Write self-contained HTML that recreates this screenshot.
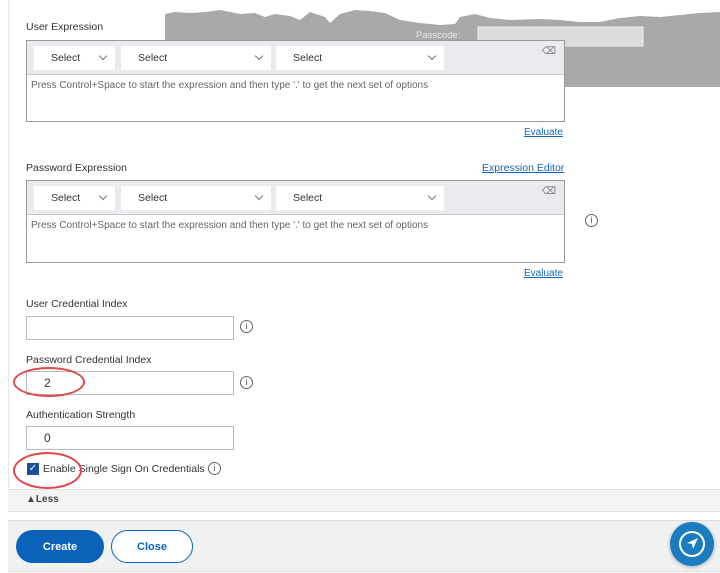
<!DOCTYPE html>
<html><head><style>
body{margin:0;width:720px;height:573px;background:#fff;font-family:"Liberation Sans",sans-serif;position:relative;overflow:hidden;font-size:11px;color:#333}
.a{position:absolute}
.lbl{position:absolute;left:26px;font-size:10.5px;color:#333}
.box{position:absolute;left:26px;width:537px;border:1px solid #9a9a9a;background:#fff}
.tb{height:33px;background:#e9ebee;border-bottom:1px solid #c8c8c8;position:relative}
.sel{position:absolute;top:5px;height:24px;background:#fff;font-size:10.5px;line-height:24px;box-sizing:border-box;padding-left:17px}
.sel:after{content:"";position:absolute;right:9px;top:7px;width:5px;height:5px;border-right:1px solid #777;border-bottom:1px solid #777;transform:rotate(45deg)}
.ph{font-size:10px;color:#666;padding:5px 4px}
.ev{position:absolute;font-size:10px;color:#1565b5;text-decoration:underline}
.inp{position:absolute;left:26px;width:208px;height:24px;border:1px solid #bbb;background:#fff;box-sizing:border-box;font-size:12px;line-height:22px;padding-left:17px}
.info{position:absolute;width:11px;height:11px;border:1px solid #666;border-radius:50%;font-size:9px;line-height:11px;text-align:center;color:#555}
</style></head><body>
<div class="a" style="left:8px;top:0;width:1px;height:490px;background:#e6e6e6"></div>
<svg class="a" style="left:0;top:0" width="720" height="90"><path d="M165 14 L175 12 L190 13 L205 12 L220 10 L240 14 L255 13 L265 17 L275 14 L290 16 L300 20 L310 12 L325 17 L330 23 L340 14 L355 10 L370 11 L385 13 L400 20 L420 23 L440 25 L455 24 L460 17 L475 14 L490 18 L510 20 L540 19 L560 20 L580 22 L600 22 L620 18 L640 16 L660 17 L680 15 L700 13 L720 12 L720 87 L563 87 L563 40 L165 40 Z" fill="#a9a9a9"/><rect x="478" y="27" width="165" height="19" fill="#dcdcdc" stroke="#f0f0f0"/><text x="416" y="38" font-size="9.5" fill="#e8e8e8" font-family="Liberation Sans">Passcode:</text></svg>
<div class="lbl" style="top:21px">User Expression</div>
<div class="box" style="top:40px;height:80px"><div class="tb"><div class="sel" style="left:7px;width:81px">Select</div><div class="sel" style="left:94px;width:150px">Select</div><div class="sel" style="left:249px;width:168px">Select</div><span class="a" style="right:8px;top:5px;font-size:10px;color:#777">⌫</span></div><div class="ph">Press Control+Space to start the expression and then type '.' to get the next set of options</div></div>
<div class="ev" style="left:524px;top:127px">Evaluate</div>
<div class="lbl" style="top:162px">Password Expression</div>
<div class="ev" style="left:482px;top:162px;font-size:10.5px">Expression Editor</div>
<div class="box" style="top:180px;height:81px"><div class="tb"><div class="sel" style="left:7px;width:81px">Select</div><div class="sel" style="left:94px;width:150px">Select</div><div class="sel" style="left:249px;width:168px">Select</div><span class="a" style="right:8px;top:5px;font-size:10px;color:#777">⌫</span></div><div class="ph">Press Control+Space to start the expression and then type '.' to get the next set of options</div></div>
<div class="info" style="left:585px;top:214px">i</div>
<div class="ev" style="left:524px;top:268px">Evaluate</div>
<div class="lbl" style="top:298px">User Credential Index</div>
<div class="inp" style="top:316px"></div><div class="info" style="left:240px;top:320px">i</div>
<div class="lbl" style="top:354px">Password Credential Index</div>
<div class="inp" style="top:371px">2</div><div class="info" style="left:240px;top:376px">i</div>
<div class="a" style="left:13px;top:367px;width:68px;height:26px;border:2px solid #e0484a;border-radius:50%"></div>
<div class="lbl" style="top:409px">Authentication Strength</div>
<div class="inp" style="top:426px">0</div>
<div class="a" style="left:27px;top:463px;width:12px;height:12px;background:#1b4f9c;color:#fff;font-size:10px;line-height:12px;text-align:center">✓</div>
<div class="a" style="left:43px;top:463px;font-size:10.5px">Enable Single Sign On Credentials</div>
<div class="info" style="left:208px;top:462px">i</div>
<div class="a" style="left:13px;top:452px;width:65px;height:33px;border:2px solid #e0484a;border-radius:50%"></div>
<div class="a" style="left:8px;top:489px;width:712px;height:21px;background:#f3f5f5;border-top:1px solid #e2e2e2;border-bottom:1px solid #e2e2e2"></div>
<div class="a" style="left:26px;top:494px;font-size:10px;font-weight:bold;color:#444">▲Less</div>
<div class="a" style="left:8px;top:520px;width:712px;height:50px;background:#f0f1f1;border-top:1px solid #e0e0e0;border-bottom:1px solid #e0e0e0"></div>
<div class="a" style="left:16px;top:530px;width:88px;height:33px;border-radius:17px;background:#0a63b8;color:#fff;font-weight:bold;font-size:11px;text-align:center;line-height:34px">Create</div>
<div class="a" style="left:111px;top:530px;width:80px;height:31px;border-radius:17px;border:1px solid #0a63b8;background:#fff;color:#0a63b8;font-weight:bold;font-size:11px;text-align:center;line-height:32px">Close</div>
<div class="a" style="left:670px;top:522px;width:44px;height:44px;border-radius:50%;background:#1c7cc0;box-shadow:0 1px 4px rgba(0,0,0,.3)"><svg width="44" height="44"><circle cx="22" cy="22" r="12" fill="none" stroke="#fff" stroke-width="2"/><path d="M28 16 L17 21 L22 22 L23 27 Z" fill="#fff"/></svg></div>
</body></html>
